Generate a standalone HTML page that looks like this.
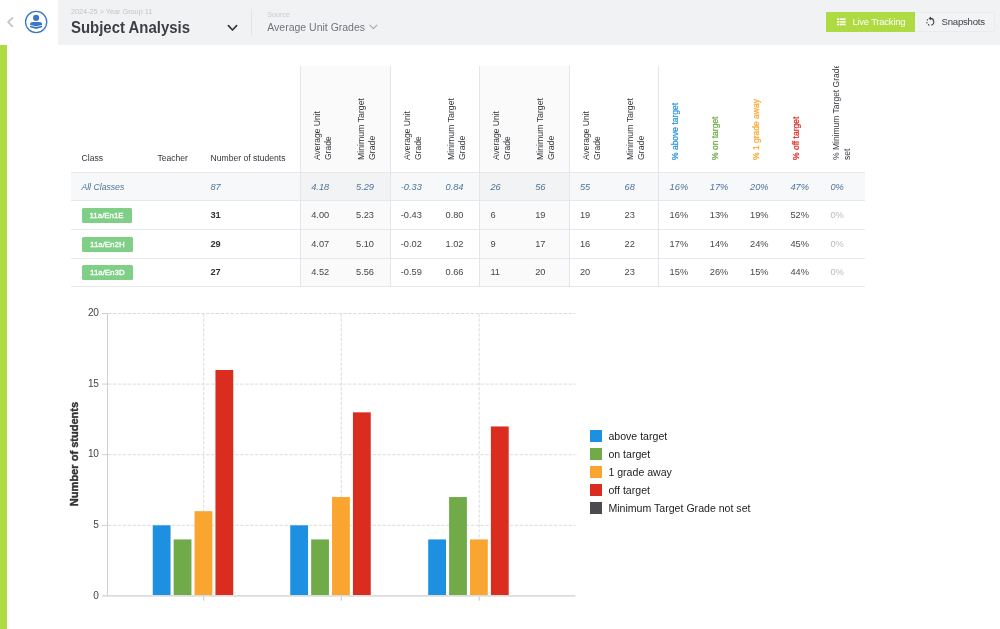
<!DOCTYPE html>
<html><head><meta charset="utf-8"><title>Subject Analysis</title>
<style>
html,body{margin:0;padding:0;background:#fff;}
body{width:1000px;height:629px;position:relative;overflow:hidden;font-family:"Liberation Sans",sans-serif;color:#444;}
.abs{position:absolute;white-space:nowrap;line-height:1;}
#hdr{position:absolute;left:58px;top:0;width:942px;height:45px;background:#f1f2f4;}
#lbar{position:absolute;left:0;top:45px;width:6.8px;height:584px;background:#addb41;}
.crumb{left:71px;top:7.6px;font-size:7.27px;color:#c3c5c8;}
.title{left:70.5px;top:20.0px;font-size:15.6px;transform:scaleX(0.9576);transform-origin:0 0;font-weight:bold;color:#3c3f45;}
.srcl{left:267.3px;top:11.3px;font-size:7.2px;color:#c9cbcf;}
.srcv{left:267.3px;top:22.5px;font-size:10.49px;color:#70747a;}
.vdiv{position:absolute;left:251px;top:9px;width:1px;height:25.5px;background:#e2e3e8;}
.btns{position:absolute;box-sizing:border-box;left:825.6px;top:11.5px;width:169.2px;height:20.8px;background:#f2f3f5;border-radius:1.5px;border:0.9px solid #eaebed;}
.live{position:absolute;left:826px;top:12px;width:89px;height:20px;background:#addb41;border-radius:1px 0 0 1px;}
.livet{left:852.4px;top:16.6px;font-size:9.5px;letter-spacing:-0.23px;color:#fff;}
.snapt{left:941.5px;top:16.6px;font-size:9.6px;letter-spacing:-0.22px;color:#3d4046;}
/* table */
.hl{position:absolute;left:71.3px;width:793.7px;height:1px;background:#e6e8ee;}
.vl{position:absolute;top:66px;width:1px;height:220.7px;background:#e3e5ec;}
.shade{position:absolute;top:66px;height:220.7px;background:rgba(40,60,80,0.025);}
.allrow{position:absolute;left:71.3px;top:172.8px;width:793.7px;height:28.1px;background:#f7f8f9;}
.th{font-size:8.59px;color:#33363b;top:154.4px;}
.td{font-size:9.25px;color:#44474c;}
.it{font-style:italic;color:#4d7497;}
.b{font-weight:bold;color:#2f3237;}
.mut{color:#b9bbbe;}
.badge{position:absolute;left:81.6px;height:15px;background:#80cf86;border-radius:1.5px;color:#fff;font-size:7.9px;-webkit-text-stroke:0.3px #fff;line-height:15.4px;text-align:center;white-space:nowrap;}
.rot{position:absolute;transform-origin:0 0;transform:rotate(-90deg);white-space:nowrap;font-size:8.5px;line-height:11.1px;color:#33363b;}
.clip{position:absolute;left:290px;top:66px;width:580px;height:107px;overflow:hidden;}
.leg{font-size:10.58px;color:#1c1c1c;left:608.4px;font-family:"Liberation Sans",sans-serif;}
.sq{position:absolute;left:590px;width:12px;height:11.8px;}
#root{position:absolute;left:0;top:0;width:1000px;height:629px;will-change:transform;}
</style></head><body><div id="root">
<div id="hdr"></div>
<div id="lbar"></div>

<svg class="abs" style="left:0;top:0" width="60" height="45" viewBox="0 0 60 45"><path d="M12.4 17.9 L8.1 22.1 L12.4 26.3" fill="none" stroke="#c3c4c8" stroke-width="1.8" stroke-linecap="round" stroke-linejoin="round"/><circle cx="36.15" cy="22" r="10.6" fill="#fff" stroke="#3a77c6" stroke-width="1.3"/><circle cx="36.1" cy="17.9" r="3.05" fill="#3a77c6"/><path d="M30.1 25 L30.1 24 Q30.1 22 33 22 L39.2 22 Q42.1 22 42.1 24 L42.1 25 L36.1 26.3 Z" fill="#3a77c6"/><path d="M30.1 25.8 L36.1 27.1 L42.1 25.8 L42.1 27.3 L36.1 29 L30.1 27.3 Z" fill="#3a77c6"/></svg>
<div class="abs crumb">2024-25 &gt; Year Group 11</div>
<div class="abs title">Subject Analysis</div>
<svg class="abs" style="left:224px;top:20px" width="20" height="16" viewBox="224 20 20 16"><path d="M228.4 25.7 L232.5 30 L236.6 25.7" fill="none" stroke="#33363b" stroke-width="1.7" stroke-linecap="round" stroke-linejoin="round"/></svg>
<div class="vdiv"></div>
<div class="abs srcl">Source</div>
<div class="abs srcv">Average Unit Grades</div>
<svg class="abs" style="left:366px;top:20px" width="16" height="14" viewBox="366 20 16 14"><path d="M369.9 25.2 L373.4 28.6 L376.9 25.2" fill="none" stroke="#a4a7ac" stroke-width="1.1" stroke-linecap="round" stroke-linejoin="round"/></svg>
<div class="btns"></div><div class="live"></div>
<svg class="abs" style="left:835px;top:16px" width="14" height="12" viewBox="835 16 14 12"><rect x="837.1" y="18.4" width="2.2" height="1.6" fill="#fff"/><rect x="839.9" y="18.4" width="5.7" height="1.6" fill="#fff"/><rect x="837.1" y="21.05" width="2.2" height="1.6" fill="#fff"/><rect x="839.9" y="21.05" width="5.7" height="1.6" fill="#fff"/><rect x="837.1" y="23.7" width="2.2" height="1.6" fill="#fff"/><rect x="839.9" y="23.7" width="5.7" height="1.6" fill="#fff"/></svg>
<div class="abs livet">Live Tracking</div>
<svg class="abs" style="left:923px;top:14px" width="14" height="16" viewBox="923 14 14 16"><path d="M930.3 18.4 A3.45 3.45 0 0 1 931.2 25.2" fill="none" stroke="#3c3f45" stroke-width="1.05"/><path d="M929.4 25.2 A3.45 3.45 0 0 1 929.0 18.65" fill="none" stroke="#3c3f45" stroke-width="1.05" stroke-dasharray="1.5 1.4"/><path d="M928.5 18.4 L931.0 16.5 L931.0 20.2 Z" fill="#3c3f45"/></svg>
<div class="abs snapt">Snapshots</div>
<div class="allrow"></div>
<div class="shade" style="left:300.5px;width:89.5px"></div>
<div class="shade" style="left:479.5px;width:89.5px"></div>
<div class="hl" style="top:171.8px"></div>
<div class="hl" style="top:200.4px"></div>
<div class="hl" style="top:229.0px"></div>
<div class="hl" style="top:257.6px"></div>
<div class="hl" style="top:286.2px"></div>
<div class="vl" style="left:300.0px"></div>
<div class="vl" style="left:389.5px"></div>
<div class="vl" style="left:479.0px"></div>
<div class="vl" style="left:568.5px"></div>
<div class="vl" style="left:658.0px"></div>
<div class="abs th" style="left:81.6px">Class</div>
<div class="abs th" style="left:157.4px">Teacher</div>
<div class="abs th" style="left:210.6px">Number of students</div>
<div class="clip">
<div class="rot" style="left:22.0px;top:93.6px;">Average Unit<br>Grade</div>
<div class="rot" style="left:66.0px;top:93.6px;font-size:8.74px;">Minimum Target<br>Grade</div>
<div class="rot" style="left:111.5px;top:93.6px;">Average Unit<br>Grade</div>
<div class="rot" style="left:155.5px;top:93.6px;font-size:8.74px;">Minimum Target<br>Grade</div>
<div class="rot" style="left:201.2px;top:93.6px;">Average Unit<br>Grade</div>
<div class="rot" style="left:245.20000000000005px;top:93.6px;font-size:8.74px;">Minimum Target<br>Grade</div>
<div class="rot" style="left:290.69999999999993px;top:93.6px;">Average Unit<br>Grade</div>
<div class="rot" style="left:334.5px;top:93.6px;font-size:8.74px;">Minimum Target<br>Grade</div>
<div class="rot" style="left:380.30000000000007px;top:93.6px;color:#2d94e4;-webkit-text-stroke:0.25px #2d94e4;">% above target</div>
<div class="rot" style="left:420.0px;top:93.6px;color:#6fae46;-webkit-text-stroke:0.25px #6fae46;">% on target</div>
<div class="rot" style="left:460.70000000000005px;top:93.6px;color:#f8a833;-webkit-text-stroke:0.25px #f8a833;">% 1 grade away</div>
<div class="rot" style="left:501.1px;top:93.6px;color:#de3026;-webkit-text-stroke:0.25px #de3026;">% off target</div>
<div class="rot" style="left:541.1px;top:93.6px;">% Minimum Target Grade not<br>set</div>
</div>
<div class="abs td it" style="left:81.4px;top:182.60000000000002px;font-size:8.69px">All Classes</div>
<div class="abs td it" style="left:210.4px;top:182.60000000000002px">87</div>
<div class="abs td it" style="left:311.2px;top:182.60000000000002px">4.18</div>
<div class="abs td it" style="left:356px;top:182.60000000000002px">5.29</div>
<div class="abs td it" style="left:400.7px;top:182.60000000000002px">-0.33</div>
<div class="abs td it" style="left:445.5px;top:182.60000000000002px">0.84</div>
<div class="abs td it" style="left:490.4px;top:182.60000000000002px">26</div>
<div class="abs td it" style="left:535.2px;top:182.60000000000002px">56</div>
<div class="abs td it" style="left:579.9px;top:182.60000000000002px">55</div>
<div class="abs td it" style="left:624.5px;top:182.60000000000002px">68</div>
<div class="abs td it" style="left:669.6px;top:182.60000000000002px">16%</div>
<div class="abs td it" style="left:709.8px;top:182.60000000000002px">17%</div>
<div class="abs td it" style="left:750px;top:182.60000000000002px">20%</div>
<div class="abs td it" style="left:790.4px;top:182.60000000000002px">47%</div>
<div class="abs td it" style="left:830.4px;top:182.60000000000002px">0%</div>
<div class="badge" style="top:208.0px;width:50px">11a/En1E</div>
<div class="abs td b" style="left:210.4px;top:211.2px">31</div>
<div class="abs td" style="left:311.2px;top:211.2px">4.00</div>
<div class="abs td" style="left:356px;top:211.2px">5.23</div>
<div class="abs td" style="left:400.7px;top:211.2px">-0.43</div>
<div class="abs td" style="left:445.5px;top:211.2px">0.80</div>
<div class="abs td" style="left:490.4px;top:211.2px">6</div>
<div class="abs td" style="left:535.2px;top:211.2px">19</div>
<div class="abs td" style="left:579.9px;top:211.2px">19</div>
<div class="abs td" style="left:624.5px;top:211.2px">23</div>
<div class="abs td" style="left:669.6px;top:211.2px">16%</div>
<div class="abs td" style="left:709.8px;top:211.2px">13%</div>
<div class="abs td" style="left:750px;top:211.2px">19%</div>
<div class="abs td" style="left:790.4px;top:211.2px">52%</div>
<div class="abs td mut" style="left:830.4px;top:211.2px">0%</div>
<div class="badge" style="top:236.60000000000002px;width:51.5px">11a/En2H</div>
<div class="abs td b" style="left:210.4px;top:239.8px">29</div>
<div class="abs td" style="left:311.2px;top:239.8px">4.07</div>
<div class="abs td" style="left:356px;top:239.8px">5.10</div>
<div class="abs td" style="left:400.7px;top:239.8px">-0.02</div>
<div class="abs td" style="left:445.5px;top:239.8px">1.02</div>
<div class="abs td" style="left:490.4px;top:239.8px">9</div>
<div class="abs td" style="left:535.2px;top:239.8px">17</div>
<div class="abs td" style="left:579.9px;top:239.8px">16</div>
<div class="abs td" style="left:624.5px;top:239.8px">22</div>
<div class="abs td" style="left:669.6px;top:239.8px">17%</div>
<div class="abs td" style="left:709.8px;top:239.8px">14%</div>
<div class="abs td" style="left:750px;top:239.8px">24%</div>
<div class="abs td" style="left:790.4px;top:239.8px">45%</div>
<div class="abs td mut" style="left:830.4px;top:239.8px">0%</div>
<div class="badge" style="top:265.2px;width:51.5px">11a/En3D</div>
<div class="abs td b" style="left:210.4px;top:268.4px">27</div>
<div class="abs td" style="left:311.2px;top:268.4px">4.52</div>
<div class="abs td" style="left:356px;top:268.4px">5.56</div>
<div class="abs td" style="left:400.7px;top:268.4px">-0.59</div>
<div class="abs td" style="left:445.5px;top:268.4px">0.66</div>
<div class="abs td" style="left:490.4px;top:268.4px">11</div>
<div class="abs td" style="left:535.2px;top:268.4px">20</div>
<div class="abs td" style="left:579.9px;top:268.4px">20</div>
<div class="abs td" style="left:624.5px;top:268.4px">23</div>
<div class="abs td" style="left:669.6px;top:268.4px">15%</div>
<div class="abs td" style="left:709.8px;top:268.4px">26%</div>
<div class="abs td" style="left:750px;top:268.4px">15%</div>
<div class="abs td" style="left:790.4px;top:268.4px">44%</div>
<div class="abs td mut" style="left:830.4px;top:268.4px">0%</div>
<svg class="abs" style="left:0;top:296px" width="1000" height="333" viewBox="0 296 1000 333" font-family="Liberation Sans, sans-serif"><path d="M108 525.30 H575.4" stroke="#dcdcdc" stroke-width="1" stroke-dasharray="3.4 1.5" fill="none"/><path d="M108 454.70 H575.4" stroke="#dcdcdc" stroke-width="1" stroke-dasharray="3.4 1.5" fill="none"/><path d="M108 384.10 H575.4" stroke="#dcdcdc" stroke-width="1" stroke-dasharray="3.4 1.5" fill="none"/><path d="M108 313.50 H575.4" stroke="#dcdcdc" stroke-width="1" stroke-dasharray="3.4 1.5" fill="none"/><path d="M203.75 313.50 V595.9" stroke="#dcdcdc" stroke-width="1" stroke-dasharray="3.4 1.5" fill="none"/><path d="M203.75 595.9 V600.6999999999999" stroke="#c2c5cc" stroke-width="1" fill="none"/><path d="M341.25 313.50 V595.9" stroke="#dcdcdc" stroke-width="1" stroke-dasharray="3.4 1.5" fill="none"/><path d="M341.25 595.9 V600.6999999999999" stroke="#c2c5cc" stroke-width="1" fill="none"/><path d="M479.2 313.50 V595.9" stroke="#dcdcdc" stroke-width="1" stroke-dasharray="3.4 1.5" fill="none"/><path d="M479.2 595.9 V600.6999999999999" stroke="#c2c5cc" stroke-width="1" fill="none"/><path d="M107.5 313.00 V595.9" stroke="#cfcfcf" stroke-width="1" fill="none"/><path d="M102 595.9 H575.4" stroke="#dcdcdc" stroke-width="1.7" fill="none"/><path d="M102 525.30 H108" stroke="#cfcfcf" stroke-width="1" fill="none"/><path d="M102 454.70 H108" stroke="#cfcfcf" stroke-width="1" fill="none"/><path d="M102 384.10 H108" stroke="#cfcfcf" stroke-width="1" fill="none"/><path d="M102 313.50 H108" stroke="#cfcfcf" stroke-width="1" fill="none"/><text x="98.5" y="598.50" text-anchor="end" font-size="10.1" letter-spacing="-0.35" fill="#444">0</text><text x="98.5" y="527.90" text-anchor="end" font-size="10.1" letter-spacing="-0.35" fill="#444">5</text><text x="98.5" y="457.30" text-anchor="end" font-size="10.1" letter-spacing="-0.35" fill="#444">10</text><text x="98.5" y="386.70" text-anchor="end" font-size="10.1" letter-spacing="-0.35" fill="#444">15</text><text x="98.5" y="316.10" text-anchor="end" font-size="10.1" letter-spacing="-0.35" fill="#444">20</text><rect x="152.75" y="525.30" width="17.8" height="69.70" fill="#1e90e2"/><rect x="173.65" y="539.42" width="17.8" height="55.58" fill="#70aa49"/><rect x="194.55" y="511.18" width="17.8" height="83.82" fill="#f9a52f"/><rect x="215.45" y="369.98" width="17.8" height="225.02" fill="#da2d20"/><rect x="290.25" y="525.30" width="17.8" height="69.70" fill="#1e90e2"/><rect x="311.15" y="539.42" width="17.8" height="55.58" fill="#70aa49"/><rect x="332.05" y="497.06" width="17.8" height="97.94" fill="#f9a52f"/><rect x="352.95" y="412.34" width="17.8" height="182.66" fill="#da2d20"/><rect x="428.20" y="539.42" width="17.8" height="55.58" fill="#1e90e2"/><rect x="449.10" y="497.06" width="17.8" height="97.94" fill="#70aa49"/><rect x="470.00" y="539.42" width="17.8" height="55.58" fill="#f9a52f"/><rect x="490.90" y="426.46" width="17.8" height="168.54" fill="#da2d20"/><text transform="translate(77.9 454) rotate(-90)" text-anchor="middle" font-size="11.05" font-weight="bold" fill="#333" stroke="#333" stroke-width="0.4">Number of students</text></svg>
<div class="sq" style="top:430.4px;background:#1e90e2"></div>
<div class="abs leg" style="top:431.3px">above target</div>
<div class="sq" style="top:448.22999999999996px;background:#70aa49"></div>
<div class="abs leg" style="top:449.13px">on target</div>
<div class="sq" style="top:466.06px;background:#f9a52f"></div>
<div class="abs leg" style="top:466.96000000000004px">1 grade away</div>
<div class="sq" style="top:483.89px;background:#da2d20"></div>
<div class="abs leg" style="top:484.79px">off target</div>
<div class="sq" style="top:501.71999999999997px;background:#4a4b4f"></div>
<div class="abs leg" style="top:502.62px">Minimum Target Grade not set</div>
</div></body></html>
